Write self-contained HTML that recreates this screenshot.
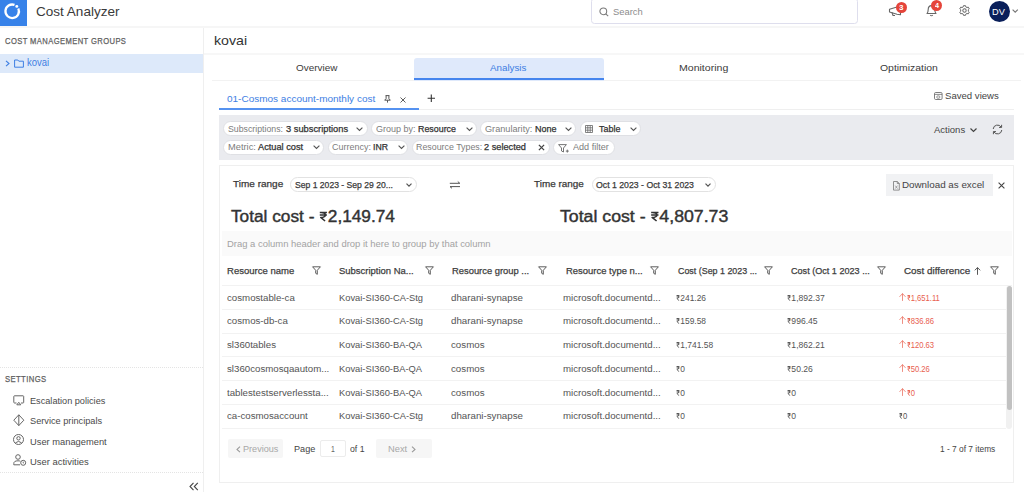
<!DOCTYPE html>
<html><head><meta charset="utf-8">
<style>
*{box-sizing:border-box;margin:0;padding:0}
html,body{width:1024px;height:492px;overflow:hidden;background:#fff;font-family:"Liberation Sans",sans-serif;color:#333}
.a{position:absolute}
.t{position:absolute;white-space:nowrap;line-height:0.9053em;height:auto}
svg.i{position:absolute;overflow:visible}
svg.rup{display:inline-block;vertical-align:0;overflow:visible}
</style></head><body>
<!-- HEADER -->
<div class="a" style="left:0;top:0;width:27px;height:27px;background:#3782e9"></div>
<svg class="i" style="left:0;top:0" width="27" height="27"><path d="M18.32 8.45 A6.75 6.75 0 1 1 14.51 4.95" fill="none" stroke="#fff" stroke-width="2.3"/><circle cx="16.8" cy="6.4" r="1.45" fill="#fff"/></svg>
<div class="a" style="left:591px;top:-2px;width:267px;height:26px;border:1px solid #dedeed;border-radius:3.5px"></div>
<svg class="i" style="left:599px;top:6.5px" width="11" height="11"><circle cx="4.3" cy="4.3" r="3.4" fill="none" stroke="#7a7a7a" stroke-width="1.05"/><line x1="6.8" y1="6.8" x2="9.2" y2="9.2" stroke="#7a7a7a" stroke-width="1.05"/></svg>
<div class="a" style="left:0;top:26px;width:1024px;height:2px;background:#f6f6f6"></div>
<svg class="i" style="left:887.5px;top:4.5px" width="16" height="12"><path d="M1.5 4.2 L9 2 L12.5 1.5 L12.5 9.8 L9 9.2 L1.5 7 Z" fill="none" stroke="#666" stroke-width="1.1" stroke-linejoin="round"/><path d="M4 7.5 L5 10.5 L7 10.5" fill="none" stroke="#666" stroke-width="1.1"/></svg>
<div class="a" style="left:896px;top:2px;width:11px;height:11px;border-radius:50%;background:#e5443a"></div>
<svg class="i" style="left:925px;top:3px" width="13" height="14"><path d="M2 10.5 Q3.2 9 3.2 6.5 Q3.2 2.8 6.5 2.6 Q9.8 2.8 9.8 6.5 Q9.8 9 11 10.5 Z" fill="none" stroke="#666" stroke-width="1.1" stroke-linejoin="round"/><path d="M5.2 12 Q6.5 13.4 7.8 12" fill="none" stroke="#666" stroke-width="1.1"/></svg>
<div class="a" style="left:931px;top:0px;width:11px;height:11px;border-radius:50%;background:#e5443a"></div>
<svg class="i" style="left:959px;top:5.2px" width="11" height="11"><g transform="scale(0.846)"><circle cx="6.5" cy="6.5" r="2" fill="none" stroke="#666" stroke-width="1.2"/><path d="M5.3 0.8 H7.7 L8.1 2.3 L9.4 3 L10.9 2.5 L12.1 4.6 L11 5.7 V7.3 L12.1 8.4 L10.9 10.5 L9.4 10 L8.1 10.7 L7.7 12.2 H5.3 L4.9 10.7 L3.6 10 L2.1 10.5 L0.9 8.4 L2 7.3 V5.7 L0.9 4.6 L2.1 2.5 L3.6 3 L4.9 2.3 Z" fill="none" stroke="#666" stroke-width="1.15" stroke-linejoin="round"/></g></svg>
<div class="a" style="left:988.6px;top:0.7px;width:21.3px;height:21.3px;border-radius:50%;background:#0a1f5a"></div>
<svg class="i" style="left:1012.2px;top:9.2px" width="7" height="4"><path d="M0.6 0.6 L3.2 3.2 L5.8 0.6" fill="none" stroke="#777" stroke-width="1.15"/></svg>

<!-- SIDEBAR -->
<div class="a" style="left:203px;top:28px;width:1px;height:464px;background:#efefef"></div>
<div class="a" style="left:0;top:54px;width:203px;height:19.3px;background:#dde9fa"></div>
<svg class="i" style="left:5px;top:60px" width="5" height="7"><path d="M1 0.8 L4 3.5 L1 6.2" fill="none" stroke="#3d7ee3" stroke-width="1.1"/></svg>
<svg class="i" style="left:14px;top:59px" width="10" height="9"><path d="M0.6 1 H3.8 L4.8 2.2 H9.4 V8.2 H0.6 Z" fill="none" stroke="#3d7ee3" stroke-width="1"/></svg>
<div class="a" style="left:0;top:367px;width:203px;height:0;border-top:1px dotted #e4e4e4"></div>
<svg class="i" style="left:13px;top:395px" width="12" height="11"><path d="M3.5 8 H1.5 Q0.8 8 0.8 7.3 V1.5 Q0.8 0.8 1.5 0.8 H10 Q10.7 0.8 10.7 1.5 V7.3 Q10.7 8 10 8 H8" fill="none" stroke="#666" stroke-width="1"/><path d="M3.8 9.8 L5.8 7.3 L7.8 9.8 Z" fill="none" stroke="#666" stroke-width="1"/></svg>
<svg class="i" style="left:13px;top:414px" width="12" height="13"><path d="M5.8 0.8 L10.8 6.2 L5.8 11.6 L0.8 6.2 Z" fill="none" stroke="#666" stroke-width="1"/><line x1="5.8" y1="0.8" x2="5.8" y2="11.6" stroke="#666" stroke-width="1"/></svg>
<svg class="i" style="left:13px;top:434px" width="12" height="12"><circle cx="5.5" cy="5.5" r="5" fill="none" stroke="#666" stroke-width="1"/><circle cx="5.5" cy="4.3" r="1.7" fill="none" stroke="#666" stroke-width="1"/><path d="M2.5 8.8 Q5.5 6 8.5 8.8" fill="none" stroke="#666" stroke-width="1"/></svg>
<svg class="i" style="left:13px;top:454px" width="14" height="12"><circle cx="5" cy="3" r="2.3" fill="none" stroke="#666" stroke-width="1"/><path d="M0.8 10.8 V9.5 Q0.8 6.8 5 6.8 Q6.5 6.8 7.3 7.2" fill="none" stroke="#666" stroke-width="1"/><path d="M0.8 10.8 H7" fill="none" stroke="#666" stroke-width="1"/><circle cx="10.2" cy="8.8" r="2.5" fill="none" stroke="#666" stroke-width="1"/><path d="M10.2 7.6 V9 H11" fill="none" stroke="#666" stroke-width="0.8"/></svg>
<div class="a" style="left:0;top:472px;width:203px;height:0;border-top:1px dotted #e4e4e4"></div>
<svg class="i" style="left:189px;top:482px" width="10" height="9"><path d="M4.5 0.8 L1 4.5 L4.5 8.2 M8.8 0.8 L5.3 4.5 L8.8 8.2" fill="none" stroke="#444" stroke-width="1.1"/></svg>

<!-- MAIN -->
<div class="a" style="left:204px;top:53px;width:820px;height:2px;background:#f7f7f7"></div>
<div class="a" style="left:212px;top:80px;width:809px;height:1px;background:#f2f2f2"></div>
<div class="a" style="left:414px;top:57.5px;width:189.5px;height:23px;background:#dfe9fb;border-radius:3px 3px 0 0"></div>
<div class="a" style="left:414px;top:78.4px;width:189.5px;height:1.7px;background:#4585ee"></div>
<div class="a" style="left:219px;top:109px;width:795px;height:1px;background:#efefef"></div>
<div class="a" style="left:219px;top:108.2px;width:200px;height:1.8px;background:#5592f0"></div>
<svg class="i" style="left:383.5px;top:95px" width="7" height="8"><path d="M1.6 0.6 H5.4 M2.1 0.6 V3.6 L0.7 5.2 H6.3 L4.9 3.6 V0.6 M3.5 5.2 V7.6" fill="none" stroke="#555" stroke-width="1" stroke-linejoin="round"/></svg>
<svg class="i" style="left:400.3px;top:96.5px" width="6" height="6"><path d="M0.5 0.5 L5.5 5.5 M5.5 0.5 L0.5 5.5" stroke="#555" stroke-width="0.95"/></svg>
<svg class="i" style="left:426.5px;top:94px" width="9" height="9"><path d="M4.3 0.5 V7.9 M0.6 4.2 H8" stroke="#333" stroke-width="1.1"/></svg>
<svg class="i" style="left:934.3px;top:92.2px" width="9" height="8"><rect x="0.5" y="0.5" width="7.6" height="7" rx="1.2" fill="none" stroke="#707070" stroke-width="0.9"/><path d="M0.5 2.4 H8.1" stroke="#707070" stroke-width="0.8"/><rect x="2.9" y="3.9" width="2.8" height="2.3" rx="0.6" fill="none" stroke="#707070" stroke-width="0.75"/></svg>

<!-- TOOLBAR -->
<div class="a" style="left:219px;top:115.4px;width:795px;height:44.4px;background:#eaebef"></div>
<div class="a" style="left:223px;top:121.4px;width:144.5px;height:14.6px;background:#fff;border:1px solid #dfe0e4;border-radius:8px"></div>
<div class="a" style="left:370.7px;top:121.4px;width:106.3px;height:14.6px;background:#fff;border:1px solid #dfe0e4;border-radius:8px"></div>
<div class="a" style="left:480px;top:121.4px;width:96px;height:14.6px;background:#fff;border:1px solid #dfe0e4;border-radius:8px"></div>
<div class="a" style="left:579.7px;top:121.4px;width:61.8px;height:14.6px;background:#fff;border:1px solid #dfe0e4;border-radius:8px"></div>
<div class="a" style="left:223px;top:140px;width:101.4px;height:14.6px;background:#fff;border:1px solid #dfe0e4;border-radius:8px"></div>
<div class="a" style="left:327.6px;top:140px;width:80.9px;height:14.6px;background:#fff;border:1px solid #dfe0e4;border-radius:8px"></div>
<div class="a" style="left:412px;top:140px;width:138.2px;height:14.6px;background:#fff;border:1px solid #dfe0e4;border-radius:8px"></div>
<div class="a" style="left:552.7px;top:140px;width:62.5px;height:14.6px;background:#fff;border:1px solid #dfe0e4;border-radius:8px"></div>
<!-- chip chevrons -->
<svg class="i" style="left:356px;top:126.5px" width="7" height="4"><path d="M0.6 0.6 L3.5 3.4 L6.4 0.6" fill="none" stroke="#555" stroke-width="1.15"/></svg>
<svg class="i" style="left:465.7px;top:126.5px" width="7" height="4"><path d="M0.6 0.6 L3.5 3.4 L6.4 0.6" fill="none" stroke="#555" stroke-width="1.15"/></svg>
<svg class="i" style="left:565.2px;top:126.5px" width="7" height="4"><path d="M0.6 0.6 L3.5 3.4 L6.4 0.6" fill="none" stroke="#555" stroke-width="1.15"/></svg>
<svg class="i" style="left:630px;top:126.5px" width="7" height="4"><path d="M0.6 0.6 L3.5 3.4 L6.4 0.6" fill="none" stroke="#555" stroke-width="1.15"/></svg>
<svg class="i" style="left:313.4px;top:145.2px" width="7" height="4"><path d="M0.6 0.6 L3.5 3.4 L6.4 0.6" fill="none" stroke="#555" stroke-width="1.15"/></svg>
<svg class="i" style="left:397.5px;top:145.2px" width="7" height="4"><path d="M0.6 0.6 L3.5 3.4 L6.4 0.6" fill="none" stroke="#555" stroke-width="1.15"/></svg>
<svg class="i" style="left:537.5px;top:144px" width="7" height="7"><path d="M0.9 0.9 L6.1 6.1 M6.1 0.9 L0.9 6.1" fill="none" stroke="#444" stroke-width="1.3"/></svg>
<!-- table grid icon -->
<svg class="i" style="left:585px;top:124.5px" width="8" height="8"><path d="M0.5 0.5 H7.5 V7.5 H0.5 Z M0.5 2.8 H7.5 M0.5 5.2 H7.5 M2.8 0.5 V7.5 M5.2 0.5 V7.5" fill="none" stroke="#666" stroke-width="0.8"/></svg>
<!-- add filter icon -->
<svg class="i" style="left:557.7px;top:143.5px" width="12" height="9"><path d="M0.6 0.6 H8.4 L5.5 4 V8 L3.5 7 V4 Z" fill="none" stroke="#666" stroke-width="0.9" stroke-linejoin="round"/><path d="M9.3 5.6 V8.6 M7.8 7.1 H10.8" stroke="#666" stroke-width="0.9"/></svg>
<!-- actions chevron & refresh -->
<svg class="i" style="left:969.6px;top:127.6px" width="7" height="4"><path d="M0.5 0.5 L3.5 3.5 L6.5 0.5" fill="none" stroke="#444" stroke-width="1.2"/></svg>
<svg class="i" style="left:992px;top:123.5px" width="11" height="11"><path d="M1.2 5 A4.3 4.3 0 0 1 9.2 3.2 M9.8 6 A4.3 4.3 0 0 1 1.8 7.8" fill="none" stroke="#555" stroke-width="1"/><path d="M9.6 0.8 V3.4 H7" fill="none" stroke="#555" stroke-width="1"/><path d="M1.4 10.2 V7.6 H4" fill="none" stroke="#555" stroke-width="1"/></svg>

<!-- CARD -->
<div class="a" style="left:219px;top:165px;width:795px;height:318px;border:1px solid #efefef"></div>
<div class="a" style="left:289.7px;top:176.5px;width:127.8px;height:15.9px;border:1px solid #e2e2e2;border-radius:8px"></div>
<svg class="i" style="left:406px;top:183px" width="6" height="4"><path d="M0.5 0.6 L3 3.1 L5.5 0.6" fill="none" stroke="#555" stroke-width="1.2"/></svg>
<div class="a" style="left:591.6px;top:176.5px;width:124.4px;height:15.9px;border:1px solid #e2e2e2;border-radius:8px"></div>
<svg class="i" style="left:705px;top:183px" width="6" height="4"><path d="M0.5 0.6 L3 3.1 L5.5 0.6" fill="none" stroke="#555" stroke-width="1.2"/></svg>
<svg class="i" style="left:448.5px;top:180.5px" width="12" height="8"><path d="M0.8 2.3 H10.8 L8.8 0.6 M11 5.6 H1 L3 7.3" fill="none" stroke="#555" stroke-width="1"/></svg>
<div class="a" style="left:885.5px;top:174.4px;width:107.3px;height:21.2px;background:#f1f2f4"></div>
<svg class="i" style="left:893px;top:180.5px" width="7" height="10"><path d="M0.5 0.5 H4.3 L6.3 2.5 V9.1 H0.5 Z M4.3 0.5 V2.5 H6.3" fill="none" stroke="#777" stroke-width="0.8" stroke-linejoin="round"/><path d="M2.2 4.6 L4.5 7.6 M4.5 4.6 L2.2 7.6" stroke="#777" stroke-width="0.6"/></svg>
<svg class="i" style="left:998px;top:181.5px" width="7" height="7"><path d="M0.6 0.6 L6.4 6.4 M6.4 0.6 L0.6 6.4" fill="none" stroke="#444" stroke-width="1.1"/></svg>
<div class="a" style="left:221.8px;top:231px;width:790.2px;height:25px;background:#fafafa"></div>

<!-- TABLE -->
<div class="a" style="left:221.8px;top:285px;width:790.2px;height:1px;background:#f2f2f2"></div>
<div class="a" style="left:221.8px;top:308.8px;width:784.2px;height:1px;background:#f2f2f2"></div>
<div class="a" style="left:221.8px;top:332.5px;width:784.2px;height:1px;background:#f2f2f2"></div>
<div class="a" style="left:221.8px;top:356.3px;width:784.2px;height:1px;background:#f2f2f2"></div>
<div class="a" style="left:221.8px;top:380px;width:784.2px;height:1px;background:#f2f2f2"></div>
<div class="a" style="left:221.8px;top:403.8px;width:784.2px;height:1px;background:#f2f2f2"></div>
<div class="a" style="left:221.8px;top:427.5px;width:784.2px;height:1px;background:#f2f2f2"></div>
<div class="a" style="left:1006.2px;top:286px;width:5.8px;height:143px;background:#f1f1f1;border-radius:3px"></div>
<div class="a" style="left:1006.7px;top:286px;width:5px;height:123.5px;background:#c1c1c1;border-radius:3px"></div>
<svg class="i" style="left:311.5px;top:266px" width="9" height="9"><path d="M0.6 0.8 H8.4 L5.3 4.3 V8.3 L3.7 7.3 V4.3 Z" fill="none" stroke="#555" stroke-width="0.95" stroke-linejoin="round"/></svg>
<svg class="i" style="left:424.7px;top:266px" width="9" height="9"><path d="M0.6 0.8 H8.4 L5.3 4.3 V8.3 L3.7 7.3 V4.3 Z" fill="none" stroke="#555" stroke-width="0.95" stroke-linejoin="round"/></svg>
<svg class="i" style="left:538px;top:266px" width="9" height="9"><path d="M0.6 0.8 H8.4 L5.3 4.3 V8.3 L3.7 7.3 V4.3 Z" fill="none" stroke="#555" stroke-width="0.95" stroke-linejoin="round"/></svg>
<svg class="i" style="left:650.4px;top:266px" width="9" height="9"><path d="M0.6 0.8 H8.4 L5.3 4.3 V8.3 L3.7 7.3 V4.3 Z" fill="none" stroke="#555" stroke-width="0.95" stroke-linejoin="round"/></svg>
<svg class="i" style="left:764.2px;top:266px" width="9" height="9"><path d="M0.6 0.8 H8.4 L5.3 4.3 V8.3 L3.7 7.3 V4.3 Z" fill="none" stroke="#555" stroke-width="0.95" stroke-linejoin="round"/></svg>
<svg class="i" style="left:876.6px;top:266px" width="9" height="9"><path d="M0.6 0.8 H8.4 L5.3 4.3 V8.3 L3.7 7.3 V4.3 Z" fill="none" stroke="#555" stroke-width="0.95" stroke-linejoin="round"/></svg>
<svg class="i" style="left:989.6px;top:266px" width="9" height="9"><path d="M0.6 0.8 H8.4 L5.3 4.3 V8.3 L3.7 7.3 V4.3 Z" fill="none" stroke="#555" stroke-width="0.95" stroke-linejoin="round"/></svg>
<svg class="i" style="left:974px;top:266.5px" width="7" height="8"><path d="M0.8 3.3 L3.5 0.6 L6.2 3.3 M3.5 0.6 V7.8" fill="none" stroke="#444" stroke-width="0.9"/></svg>


<!-- PAGER -->
<div class="a" style="left:227.9px;top:439.4px;width:55.4px;height:18.8px;background:#f6f6f6;border-radius:2px"></div>
<svg class="i" style="left:235.7px;top:445.5px" width="5" height="7"><path d="M4 0.6 L1 3.4 L4 6.2" fill="none" stroke="#999" stroke-width="1.1"/></svg>
<div class="a" style="left:319.7px;top:439.8px;width:25.9px;height:17.6px;border:1px solid #ececec;border-radius:2px"></div>
<div class="a" style="left:375.9px;top:439.4px;width:55.8px;height:18.8px;background:#f6f6f6;border-radius:2px"></div>
<svg class="i" style="left:411px;top:445.5px" width="5" height="7"><path d="M1 0.6 L4 3.4 L1 6.2" fill="none" stroke="#999" stroke-width="1.1"/></svg>

<div class="t" id="t_app" style="left:35.50px;top:6.01px;font-size:13.000px;font-weight:400;color:#3a3a3a;transform:scaleX(1.0409);transform-origin:0 0;">Cost Analyzer</div>
<div class="t" id="t_search" style="left:613.41px;top:8.01px;font-size:9.500px;font-weight:400;color:#8c8c8c;transform:scaleX(0.9865);transform-origin:0 0;">Search</div>
<div class="t" id="t_cmg" style="left:5.45px;top:38.01px;font-size:8.600px;font-weight:400;color:#5f5f5f;letter-spacing:0.45px;transform:scaleX(0.8852);transform-origin:0 0;-webkit-text-stroke:0.25px #5f5f5f;">COST MANAGEMENT GROUPS</div>
<div class="t" id="t_kov1" style="left:26.50px;top:58.00px;font-size:10.000px;font-weight:400;color:#3d7ee3;transform:scaleX(0.9486);transform-origin:0 0;">kovai</div>
<div class="t" id="t_set" style="left:5.25px;top:376.01px;font-size:8.600px;font-weight:400;color:#5f5f5f;letter-spacing:0.45px;transform:scaleX(0.8925);transform-origin:0 0;-webkit-text-stroke:0.25px #5f5f5f;">SETTINGS</div>
<div class="t" id="t_esc" style="left:29.86px;top:397.01px;font-size:9.500px;font-weight:400;color:#4a4a4a;transform:scaleX(0.9636);transform-origin:0 0;">Escalation policies</div>
<div class="t" id="t_svc" style="left:29.50px;top:417.01px;font-size:9.500px;font-weight:400;color:#4a4a4a;transform:scaleX(0.9683);transform-origin:0 0;">Service principals</div>
<div class="t" id="t_um" style="left:29.71px;top:438.01px;font-size:9.500px;font-weight:400;color:#4a4a4a;transform:scaleX(0.9814);transform-origin:0 0;">User management</div>
<div class="t" id="t_ua" style="left:29.71px;top:458.01px;font-size:9.500px;font-weight:400;color:#4a4a4a;transform:scaleX(0.9929);transform-origin:0 0;">User activities</div>
<div class="t" id="t_kov2" style="left:213.91px;top:35.01px;font-size:13.000px;font-weight:400;color:#333;transform:scaleX(1.0907);transform-origin:0 0;">kovai</div>
<div class="t" id="t_tab1" style="left:295.50px;top:64.01px;font-size:9.500px;font-weight:400;color:#3b3b3b;transform:scaleX(1.0446);transform-origin:0 0;">Overview</div>
<div class="t" id="t_tab2" style="left:490.00px;top:64.01px;font-size:9.500px;font-weight:400;color:#3d7ee3;transform:scaleX(1.0284);transform-origin:0 0;">Analysis</div>
<div class="t" id="t_tab3" style="left:678.75px;top:64.01px;font-size:9.500px;font-weight:400;color:#3b3b3b;transform:scaleX(1.1105);transform-origin:0 0;">Monitoring</div>
<div class="t" id="t_tab4" style="left:879.50px;top:64.01px;font-size:9.500px;font-weight:400;color:#3b3b3b;transform:scaleX(1.0966);transform-origin:0 0;">Optimization</div>
<div class="t" id="t_doc" style="left:227.21px;top:95.01px;font-size:9.500px;font-weight:400;color:#3d7ee3;transform:scaleX(1.0513);transform-origin:0 0;">01-Cosmos account-monthly cost</div>
<div class="t" id="t_saved" style="left:944.50px;top:92.01px;font-size:9.500px;font-weight:400;color:#444;transform:scaleX(1.0095);transform-origin:0 0;">Saved views</div>
<div class="t" id="c1a" style="left:228.25px;top:126.01px;font-size:8.800px;font-weight:400;color:#7c7c7c;transform:scaleX(0.9960);transform-origin:0 0;">Subscriptions:</div>
<div class="t" id="c1b" style="left:286.30px;top:126.01px;font-size:8.800px;font-weight:400;color:#333;transform:scaleX(1.0577);transform-origin:0 0;-webkit-text-stroke:0.25px #333;">3 subscriptions</div>
<div class="t" id="c2a" style="left:375.50px;top:126.01px;font-size:8.800px;font-weight:400;color:#7c7c7c;transform:scaleX(1.0238);transform-origin:0 0;">Group by:</div>
<div class="t" id="c2b" style="left:417.55px;top:126.01px;font-size:8.800px;font-weight:400;color:#333;transform:scaleX(1.0079);transform-origin:0 0;-webkit-text-stroke:0.25px #333;">Resource</div>
<div class="t" id="c3a" style="left:484.55px;top:126.01px;font-size:8.800px;font-weight:400;color:#7c7c7c;transform:scaleX(1.0408);transform-origin:0 0;">Granularity:</div>
<div class="t" id="c3b" style="left:534.55px;top:126.01px;font-size:8.800px;font-weight:400;color:#333;transform:scaleX(1.0211);transform-origin:0 0;-webkit-text-stroke:0.25px #333;">None</div>
<div class="t" id="c4b" style="left:598.91px;top:126.01px;font-size:8.800px;font-weight:400;color:#333;transform:scaleX(1.0166);transform-origin:0 0;-webkit-text-stroke:0.25px #333;">Table</div>
<div class="t" id="c5a" style="left:227.71px;top:144.01px;font-size:8.800px;font-weight:400;color:#7c7c7c;transform:scaleX(1.0560);transform-origin:0 0;">Metric:</div>
<div class="t" id="c5b" style="left:258.21px;top:144.01px;font-size:8.800px;font-weight:400;color:#333;transform:scaleX(1.0495);transform-origin:0 0;-webkit-text-stroke:0.25px #333;">Actual cost</div>
<div class="t" id="c6a" style="left:332.41px;top:144.01px;font-size:8.800px;font-weight:400;color:#7c7c7c;transform:scaleX(1.0203);transform-origin:0 0;">Currency:</div>
<div class="t" id="c6b" style="left:373.41px;top:144.01px;font-size:8.800px;font-weight:400;color:#333;transform:scaleX(0.9899);transform-origin:0 0;-webkit-text-stroke:0.25px #333;">INR</div>
<div class="t" id="c7a" style="left:415.75px;top:144.01px;font-size:8.800px;font-weight:400;color:#7c7c7c;transform:scaleX(1.0054);transform-origin:0 0;">Resource Types:</div>
<div class="t" id="c7b" style="left:484.30px;top:144.01px;font-size:8.800px;font-weight:400;color:#333;transform:scaleX(1.0472);transform-origin:0 0;-webkit-text-stroke:0.25px #333;">2 selected</div>
<div class="t" id="c8a" style="left:573.00px;top:144.01px;font-size:8.800px;font-weight:400;color:#7c7c7c;transform:scaleX(1.0319);transform-origin:0 0;">Add filter</div>
<div class="t" id="t_act" style="left:934.00px;top:126.01px;font-size:9.500px;font-weight:400;color:#444;transform:scaleX(1.0000);transform-origin:0 0;">Actions</div>
<div class="t" id="t_tr1" style="left:233.05px;top:180.01px;font-size:9.500px;font-weight:400;color:#3a3a3a;transform:scaleX(1.0529);transform-origin:0 0;-webkit-text-stroke:0.25px #3a3a3a;">Time range</div>
<div class="t" id="t_tr2" style="left:534.11px;top:180.01px;font-size:9.500px;font-weight:400;color:#3a3a3a;transform:scaleX(1.0429);transform-origin:0 0;-webkit-text-stroke:0.25px #3a3a3a;">Time range</div>
<div class="t" id="t_d1" style="left:295.30px;top:181.01px;font-size:9.000px;font-weight:400;color:#3a3a3a;transform:scaleX(0.9547);transform-origin:0 0;-webkit-text-stroke:0.25px #3a3a3a;">Sep 1 2023 - Sep 29 20...</div>
<div class="t" id="t_d2" style="left:596.25px;top:181.01px;font-size:9.000px;font-weight:400;color:#3a3a3a;transform:scaleX(0.9691);transform-origin:0 0;-webkit-text-stroke:0.25px #3a3a3a;">Oct 1 2023 - Oct 31 2023</div>
<div class="t" id="t_tot1" style="left:231.00px;top:210.01px;font-size:16.000px;font-weight:400;color:#333;transform:scaleX(1.0779);transform-origin:0 0;-webkit-text-stroke:0.4px #333;">Total cost - <svg class="rup" viewBox="0 0 6 8" style="width:0.46em;height:0.69em;margin-right:0.04em"><path d="M0.3 0.7 H5.7 M0.3 2.7 H5.7 M1.3 0.7 Q4.5 0.7 4.5 2.7 Q4.5 4.7 1.0 4.7 L4.3 7.6" fill="none" stroke="currentColor" stroke-width="1.15" stroke-linejoin="round"/></svg>2,149.74</div>
<div class="t" id="t_tot2" style="left:560.05px;top:210.01px;font-size:16.000px;font-weight:400;color:#333;transform:scaleX(1.1066);transform-origin:0 0;-webkit-text-stroke:0.4px #333;">Total cost - <svg class="rup" viewBox="0 0 6 8" style="width:0.46em;height:0.69em;margin-right:0.04em"><path d="M0.3 0.7 H5.7 M0.3 2.7 H5.7 M1.3 0.7 Q4.5 0.7 4.5 2.7 Q4.5 4.7 1.0 4.7 L4.3 7.6" fill="none" stroke="currentColor" stroke-width="1.15" stroke-linejoin="round"/></svg>4,807.73</div>
<div class="t" id="t_dl" style="left:901.75px;top:181.01px;font-size:9.500px;font-weight:400;color:#444;transform:scaleX(1.0318);transform-origin:0 0;">Download as excel</div>
<div class="t" id="t_drag" style="left:226.75px;top:240.01px;font-size:9.500px;font-weight:400;color:#a3a3a3;transform:scaleX(0.9943);transform-origin:0 0;">Drag a column header and drop it here to group by that column</div>
<div class="t" id="h1" style="left:226.50px;top:267.01px;font-size:9.600px;font-weight:400;color:#3d3d3d;transform:scaleX(0.9936);transform-origin:0 0;-webkit-text-stroke:0.25px #3d3d3d;">Resource name</div>
<div class="t" id="h2" style="left:339.25px;top:267.01px;font-size:9.600px;font-weight:400;color:#3d3d3d;transform:scaleX(0.9869);transform-origin:0 0;-webkit-text-stroke:0.25px #3d3d3d;">Subscription Na...</div>
<div class="t" id="h3" style="left:452.41px;top:267.01px;font-size:9.600px;font-weight:400;color:#3d3d3d;transform:scaleX(0.9774);transform-origin:0 0;-webkit-text-stroke:0.25px #3d3d3d;">Resource group ...</div>
<div class="t" id="h4" style="left:565.61px;top:267.01px;font-size:9.600px;font-weight:400;color:#3d3d3d;transform:scaleX(0.9848);transform-origin:0 0;-webkit-text-stroke:0.25px #3d3d3d;">Resource type n...</div>
<div class="t" id="h5" style="left:678.25px;top:267.01px;font-size:9.600px;font-weight:400;color:#3d3d3d;transform:scaleX(0.9265);transform-origin:0 0;-webkit-text-stroke:0.25px #3d3d3d;">Cost (Sep 1 2023 ...</div>
<div class="t" id="h6" style="left:791.30px;top:267.01px;font-size:9.600px;font-weight:400;color:#3d3d3d;transform:scaleX(0.9466);transform-origin:0 0;-webkit-text-stroke:0.25px #3d3d3d;">Cost (Oct 1 2023 ...</div>
<div class="t" id="h7" style="left:904.25px;top:267.01px;font-size:9.600px;font-weight:400;color:#3d3d3d;transform:scaleX(1.0273);transform-origin:0 0;-webkit-text-stroke:0.25px #3d3d3d;">Cost difference</div>
<div class="t" id="r00" style="left:227.30px;top:294.01px;font-size:9.600px;font-weight:400;color:#545454;transform:scaleX(1.0095);transform-origin:0 0;">cosmostable-ca</div>
<div class="t" id="r01" style="left:338.75px;top:294.01px;font-size:9.600px;font-weight:400;color:#545454;transform:scaleX(0.9725);transform-origin:0 0;">Kovai-SI360-CA-Stg</div>
<div class="t" id="r02" style="left:451.25px;top:294.01px;font-size:9.600px;font-weight:400;color:#545454;transform:scaleX(1.0142);transform-origin:0 0;">dharani-synapse</div>
<div class="t" id="r03" style="left:562.50px;top:294.01px;font-size:9.600px;font-weight:400;color:#545454;transform:scaleX(1.0066);transform-origin:0 0;">microsoft.documentd...</div>
<div class="t" id="r04" style="left:675.75px;top:294.84px;font-size:8.600px;font-weight:400;color:#545454;transform:scaleX(0.9804);transform-origin:0 0;"><svg class="rup" viewBox="0 0 4 7" style="width:0.46em;height:0.69em;margin-right:0.05em;vertical-align:0.03em"><path d="M0.3 0.6 H3.8 M0.3 2.3 H3.8 M0.9 0.6 Q3.1 0.6 3.1 2.3 Q3.1 3.9 0.9 3.9 L3.0 6.7" fill="none" stroke="currentColor" stroke-width="1.1" stroke-linejoin="round"/></svg>241.26</div>
<div class="t" id="r05" style="left:786.86px;top:294.84px;font-size:8.600px;font-weight:400;color:#545454;transform:scaleX(0.9976);transform-origin:0 0;"><svg class="rup" viewBox="0 0 4 7" style="width:0.46em;height:0.69em;margin-right:0.05em;vertical-align:0.03em"><path d="M0.3 0.6 H3.8 M0.3 2.3 H3.8 M0.9 0.6 Q3.1 0.6 3.1 2.3 Q3.1 3.9 0.9 3.9 L3.0 6.7" fill="none" stroke="currentColor" stroke-width="1.1" stroke-linejoin="round"/></svg>1,892.37</div>
<div class="t" id="r06" style="left:898.66px;top:293.11px;font-size:8.600px;font-weight:400;color:#e8604f;transform:scaleX(0.8893);transform-origin:0 0;"><svg class="rup" viewBox="0 0 8 8" style="width:0.92em;height:0.92em;margin-right:0.12em;margin-left:-0.02em"><path d="M0.6 3.9 L4 0.6 L7.4 3.9 M4 0.6 V8" fill="none" stroke="currentColor" stroke-width="0.75"/></svg><svg class="rup" viewBox="0 0 4 7" style="width:0.46em;height:0.69em;margin-right:0.05em;vertical-align:0.03em"><path d="M0.3 0.6 H3.8 M0.3 2.3 H3.8 M0.9 0.6 Q3.1 0.6 3.1 2.3 Q3.1 3.9 0.9 3.9 L3.0 6.7" fill="none" stroke="currentColor" stroke-width="1.1" stroke-linejoin="round"/></svg>1,651.11</div>
<div class="t" id="r10" style="left:226.80px;top:317.01px;font-size:9.600px;font-weight:400;color:#545454;transform:scaleX(1.0095);transform-origin:0 0;">cosmos-db-ca</div>
<div class="t" id="r11" style="left:338.50px;top:317.01px;font-size:9.600px;font-weight:400;color:#545454;transform:scaleX(0.9725);transform-origin:0 0;">Kovai-SI360-CA-Stg</div>
<div class="t" id="r12" style="left:451.00px;top:317.01px;font-size:9.600px;font-weight:400;color:#545454;transform:scaleX(1.0142);transform-origin:0 0;">dharani-synapse</div>
<div class="t" id="r13" style="left:563.00px;top:317.01px;font-size:9.600px;font-weight:400;color:#545454;transform:scaleX(1.0066);transform-origin:0 0;">microsoft.documentd...</div>
<div class="t" id="r14" style="left:675.75px;top:317.84px;font-size:8.600px;font-weight:400;color:#545454;transform:scaleX(0.9804);transform-origin:0 0;"><svg class="rup" viewBox="0 0 4 7" style="width:0.46em;height:0.69em;margin-right:0.05em;vertical-align:0.03em"><path d="M0.3 0.6 H3.8 M0.3 2.3 H3.8 M0.9 0.6 Q3.1 0.6 3.1 2.3 Q3.1 3.9 0.9 3.9 L3.0 6.7" fill="none" stroke="currentColor" stroke-width="1.1" stroke-linejoin="round"/></svg>159.58</div>
<div class="t" id="r15" style="left:786.86px;top:317.84px;font-size:8.600px;font-weight:400;color:#545454;transform:scaleX(0.9976);transform-origin:0 0;"><svg class="rup" viewBox="0 0 4 7" style="width:0.46em;height:0.69em;margin-right:0.05em;vertical-align:0.03em"><path d="M0.3 0.6 H3.8 M0.3 2.3 H3.8 M0.9 0.6 Q3.1 0.6 3.1 2.3 Q3.1 3.9 0.9 3.9 L3.0 6.7" fill="none" stroke="currentColor" stroke-width="1.1" stroke-linejoin="round"/></svg>996.45</div>
<div class="t" id="r16" style="left:898.66px;top:316.10px;font-size:8.600px;font-weight:400;color:#e8604f;transform:scaleX(0.8893);transform-origin:0 0;"><svg class="rup" viewBox="0 0 8 8" style="width:0.92em;height:0.92em;margin-right:0.12em;margin-left:-0.02em"><path d="M0.6 3.9 L4 0.6 L7.4 3.9 M4 0.6 V8" fill="none" stroke="currentColor" stroke-width="0.75"/></svg><svg class="rup" viewBox="0 0 4 7" style="width:0.46em;height:0.69em;margin-right:0.05em;vertical-align:0.03em"><path d="M0.3 0.6 H3.8 M0.3 2.3 H3.8 M0.9 0.6 Q3.1 0.6 3.1 2.3 Q3.1 3.9 0.9 3.9 L3.0 6.7" fill="none" stroke="currentColor" stroke-width="1.1" stroke-linejoin="round"/></svg>836.86</div>
<div class="t" id="r20" style="left:227.05px;top:341.01px;font-size:9.600px;font-weight:400;color:#545454;transform:scaleX(1.0095);transform-origin:0 0;">sl360tables</div>
<div class="t" id="r21" style="left:338.50px;top:341.01px;font-size:9.600px;font-weight:400;color:#545454;transform:scaleX(0.9725);transform-origin:0 0;">Kovai-SI360-BA-QA</div>
<div class="t" id="r22" style="left:451.00px;top:341.01px;font-size:9.600px;font-weight:400;color:#545454;transform:scaleX(1.0142);transform-origin:0 0;">cosmos</div>
<div class="t" id="r23" style="left:563.00px;top:341.01px;font-size:9.600px;font-weight:400;color:#545454;transform:scaleX(1.0066);transform-origin:0 0;">microsoft.documentd...</div>
<div class="t" id="r24" style="left:675.75px;top:341.84px;font-size:8.600px;font-weight:400;color:#545454;transform:scaleX(0.9804);transform-origin:0 0;"><svg class="rup" viewBox="0 0 4 7" style="width:0.46em;height:0.69em;margin-right:0.05em;vertical-align:0.03em"><path d="M0.3 0.6 H3.8 M0.3 2.3 H3.8 M0.9 0.6 Q3.1 0.6 3.1 2.3 Q3.1 3.9 0.9 3.9 L3.0 6.7" fill="none" stroke="currentColor" stroke-width="1.1" stroke-linejoin="round"/></svg>1,741.58</div>
<div class="t" id="r25" style="left:786.86px;top:341.84px;font-size:8.600px;font-weight:400;color:#545454;transform:scaleX(0.9976);transform-origin:0 0;"><svg class="rup" viewBox="0 0 4 7" style="width:0.46em;height:0.69em;margin-right:0.05em;vertical-align:0.03em"><path d="M0.3 0.6 H3.8 M0.3 2.3 H3.8 M0.9 0.6 Q3.1 0.6 3.1 2.3 Q3.1 3.9 0.9 3.9 L3.0 6.7" fill="none" stroke="currentColor" stroke-width="1.1" stroke-linejoin="round"/></svg>1,862.21</div>
<div class="t" id="r26" style="left:898.66px;top:340.11px;font-size:8.600px;font-weight:400;color:#e8604f;transform:scaleX(0.8893);transform-origin:0 0;"><svg class="rup" viewBox="0 0 8 8" style="width:0.92em;height:0.92em;margin-right:0.12em;margin-left:-0.02em"><path d="M0.6 3.9 L4 0.6 L7.4 3.9 M4 0.6 V8" fill="none" stroke="currentColor" stroke-width="0.75"/></svg><svg class="rup" viewBox="0 0 4 7" style="width:0.46em;height:0.69em;margin-right:0.05em;vertical-align:0.03em"><path d="M0.3 0.6 H3.8 M0.3 2.3 H3.8 M0.9 0.6 Q3.1 0.6 3.1 2.3 Q3.1 3.9 0.9 3.9 L3.0 6.7" fill="none" stroke="currentColor" stroke-width="1.1" stroke-linejoin="round"/></svg>120.63</div>
<div class="t" id="r30" style="left:227.05px;top:365.01px;font-size:9.600px;font-weight:400;color:#545454;transform:scaleX(1.0095);transform-origin:0 0;">sl360cosmosqaautom...</div>
<div class="t" id="r31" style="left:338.50px;top:365.01px;font-size:9.600px;font-weight:400;color:#545454;transform:scaleX(0.9725);transform-origin:0 0;">Kovai-SI360-BA-QA</div>
<div class="t" id="r32" style="left:451.00px;top:365.01px;font-size:9.600px;font-weight:400;color:#545454;transform:scaleX(1.0142);transform-origin:0 0;">cosmos</div>
<div class="t" id="r33" style="left:563.00px;top:365.01px;font-size:9.600px;font-weight:400;color:#545454;transform:scaleX(1.0066);transform-origin:0 0;">microsoft.documentd...</div>
<div class="t" id="r34" style="left:675.75px;top:365.84px;font-size:8.600px;font-weight:400;color:#545454;transform:scaleX(0.9804);transform-origin:0 0;"><svg class="rup" viewBox="0 0 4 7" style="width:0.46em;height:0.69em;margin-right:0.05em;vertical-align:0.03em"><path d="M0.3 0.6 H3.8 M0.3 2.3 H3.8 M0.9 0.6 Q3.1 0.6 3.1 2.3 Q3.1 3.9 0.9 3.9 L3.0 6.7" fill="none" stroke="currentColor" stroke-width="1.1" stroke-linejoin="round"/></svg>0</div>
<div class="t" id="r35" style="left:786.86px;top:365.84px;font-size:8.600px;font-weight:400;color:#545454;transform:scaleX(0.9976);transform-origin:0 0;"><svg class="rup" viewBox="0 0 4 7" style="width:0.46em;height:0.69em;margin-right:0.05em;vertical-align:0.03em"><path d="M0.3 0.6 H3.8 M0.3 2.3 H3.8 M0.9 0.6 Q3.1 0.6 3.1 2.3 Q3.1 3.9 0.9 3.9 L3.0 6.7" fill="none" stroke="currentColor" stroke-width="1.1" stroke-linejoin="round"/></svg>50.26</div>
<div class="t" id="r36" style="left:898.66px;top:364.11px;font-size:8.600px;font-weight:400;color:#e8604f;transform:scaleX(0.8893);transform-origin:0 0;"><svg class="rup" viewBox="0 0 8 8" style="width:0.92em;height:0.92em;margin-right:0.12em;margin-left:-0.02em"><path d="M0.6 3.9 L4 0.6 L7.4 3.9 M4 0.6 V8" fill="none" stroke="currentColor" stroke-width="0.75"/></svg><svg class="rup" viewBox="0 0 4 7" style="width:0.46em;height:0.69em;margin-right:0.05em;vertical-align:0.03em"><path d="M0.3 0.6 H3.8 M0.3 2.3 H3.8 M0.9 0.6 Q3.1 0.6 3.1 2.3 Q3.1 3.9 0.9 3.9 L3.0 6.7" fill="none" stroke="currentColor" stroke-width="1.1" stroke-linejoin="round"/></svg>50.26</div>
<div class="t" id="r40" style="left:227.30px;top:389.01px;font-size:9.600px;font-weight:400;color:#545454;transform:scaleX(1.0095);transform-origin:0 0;">tablestestserverlessta...</div>
<div class="t" id="r41" style="left:338.50px;top:389.01px;font-size:9.600px;font-weight:400;color:#545454;transform:scaleX(0.9725);transform-origin:0 0;">Kovai-SI360-BA-QA</div>
<div class="t" id="r42" style="left:451.00px;top:389.01px;font-size:9.600px;font-weight:400;color:#545454;transform:scaleX(1.0142);transform-origin:0 0;">cosmos</div>
<div class="t" id="r43" style="left:563.00px;top:389.01px;font-size:9.600px;font-weight:400;color:#545454;transform:scaleX(1.0066);transform-origin:0 0;">microsoft.documentd...</div>
<div class="t" id="r44" style="left:675.75px;top:389.84px;font-size:8.600px;font-weight:400;color:#545454;transform:scaleX(0.9804);transform-origin:0 0;"><svg class="rup" viewBox="0 0 4 7" style="width:0.46em;height:0.69em;margin-right:0.05em;vertical-align:0.03em"><path d="M0.3 0.6 H3.8 M0.3 2.3 H3.8 M0.9 0.6 Q3.1 0.6 3.1 2.3 Q3.1 3.9 0.9 3.9 L3.0 6.7" fill="none" stroke="currentColor" stroke-width="1.1" stroke-linejoin="round"/></svg>0</div>
<div class="t" id="r45" style="left:786.86px;top:389.84px;font-size:8.600px;font-weight:400;color:#545454;transform:scaleX(0.9976);transform-origin:0 0;"><svg class="rup" viewBox="0 0 4 7" style="width:0.46em;height:0.69em;margin-right:0.05em;vertical-align:0.03em"><path d="M0.3 0.6 H3.8 M0.3 2.3 H3.8 M0.9 0.6 Q3.1 0.6 3.1 2.3 Q3.1 3.9 0.9 3.9 L3.0 6.7" fill="none" stroke="currentColor" stroke-width="1.1" stroke-linejoin="round"/></svg>0</div>
<div class="t" id="r46" style="left:898.66px;top:388.11px;font-size:8.600px;font-weight:400;color:#e8604f;transform:scaleX(0.8893);transform-origin:0 0;"><svg class="rup" viewBox="0 0 8 8" style="width:0.92em;height:0.92em;margin-right:0.12em;margin-left:-0.02em"><path d="M0.6 3.9 L4 0.6 L7.4 3.9 M4 0.6 V8" fill="none" stroke="currentColor" stroke-width="0.75"/></svg><svg class="rup" viewBox="0 0 4 7" style="width:0.46em;height:0.69em;margin-right:0.05em;vertical-align:0.03em"><path d="M0.3 0.6 H3.8 M0.3 2.3 H3.8 M0.9 0.6 Q3.1 0.6 3.1 2.3 Q3.1 3.9 0.9 3.9 L3.0 6.7" fill="none" stroke="currentColor" stroke-width="1.1" stroke-linejoin="round"/></svg>0</div>
<div class="t" id="r50" style="left:226.80px;top:412.01px;font-size:9.600px;font-weight:400;color:#545454;transform:scaleX(1.0095);transform-origin:0 0;">ca-cosmosaccount</div>
<div class="t" id="r51" style="left:338.50px;top:412.01px;font-size:9.600px;font-weight:400;color:#545454;transform:scaleX(0.9725);transform-origin:0 0;">Kovai-SI360-CA-Stg</div>
<div class="t" id="r52" style="left:451.00px;top:412.01px;font-size:9.600px;font-weight:400;color:#545454;transform:scaleX(1.0142);transform-origin:0 0;">dharani-synapse</div>
<div class="t" id="r53" style="left:563.00px;top:412.01px;font-size:9.600px;font-weight:400;color:#545454;transform:scaleX(1.0066);transform-origin:0 0;">microsoft.documentd...</div>
<div class="t" id="r54" style="left:675.75px;top:412.84px;font-size:8.600px;font-weight:400;color:#545454;transform:scaleX(0.9804);transform-origin:0 0;"><svg class="rup" viewBox="0 0 4 7" style="width:0.46em;height:0.69em;margin-right:0.05em;vertical-align:0.03em"><path d="M0.3 0.6 H3.8 M0.3 2.3 H3.8 M0.9 0.6 Q3.1 0.6 3.1 2.3 Q3.1 3.9 0.9 3.9 L3.0 6.7" fill="none" stroke="currentColor" stroke-width="1.1" stroke-linejoin="round"/></svg>0</div>
<div class="t" id="r55" style="left:786.86px;top:412.84px;font-size:8.600px;font-weight:400;color:#545454;transform:scaleX(0.9976);transform-origin:0 0;"><svg class="rup" viewBox="0 0 4 7" style="width:0.46em;height:0.69em;margin-right:0.05em;vertical-align:0.03em"><path d="M0.3 0.6 H3.8 M0.3 2.3 H3.8 M0.9 0.6 Q3.1 0.6 3.1 2.3 Q3.1 3.9 0.9 3.9 L3.0 6.7" fill="none" stroke="currentColor" stroke-width="1.1" stroke-linejoin="round"/></svg>0</div>
<div class="t" id="r56" style="left:898.66px;top:412.84px;font-size:8.600px;font-weight:400;color:#545454;transform:scaleX(0.8893);transform-origin:0 0;"><svg class="rup" viewBox="0 0 4 7" style="width:0.46em;height:0.69em;margin-right:0.05em;vertical-align:0.03em"><path d="M0.3 0.6 H3.8 M0.3 2.3 H3.8 M0.9 0.6 Q3.1 0.6 3.1 2.3 Q3.1 3.9 0.9 3.9 L3.0 6.7" fill="none" stroke="currentColor" stroke-width="1.1" stroke-linejoin="round"/></svg>0</div>
<div class="t" id="p_prev" style="left:242.75px;top:445.01px;font-size:9.500px;font-weight:400;color:#a8a8a8;transform:scaleX(0.9570);transform-origin:0 0;">Previous</div>
<div class="t" id="p_page" style="left:293.80px;top:445.01px;font-size:9.500px;font-weight:400;color:#444;transform:scaleX(0.9603);transform-origin:0 0;">Page</div>
<div class="t" id="p_1" style="left:330.50px;top:445.01px;font-size:9.500px;font-weight:400;color:#666;transform:scaleX(0.7217);transform-origin:0 0;">1</div>
<div class="t" id="p_of" style="left:350.25px;top:445.01px;font-size:9.500px;font-weight:400;color:#444;transform:scaleX(0.9216);transform-origin:0 0;">of 1</div>
<div class="t" id="p_next" style="left:387.75px;top:445.01px;font-size:9.500px;font-weight:400;color:#a8a8a8;transform:scaleX(0.9816);transform-origin:0 0;">Next</div>
<div class="t" id="p_items" style="left:939.55px;top:445.01px;font-size:9.000px;font-weight:400;color:#444;transform:scaleX(0.9291);transform-origin:0 0;">1 - 7 of 7 items</div>
<div class="t" id="dv" style="left:991.75px;top:8.01px;font-size:9.000px;font-weight:400;color:#fff;transform:scaleX(1.0213);transform-origin:0 0;">DV</div>
<div class="t" id="b3" style="left:899.25px;top:5.01px;font-size:7.500px;font-weight:700;color:#fff;transform:scaleX(1.0667);transform-origin:0 0;">3</div>
<div class="t" id="b4" style="left:935.05px;top:3.01px;font-size:7.500px;font-weight:700;color:#fff;transform:scaleX(0.9666);transform-origin:0 0;">4</div>
</body></html>
